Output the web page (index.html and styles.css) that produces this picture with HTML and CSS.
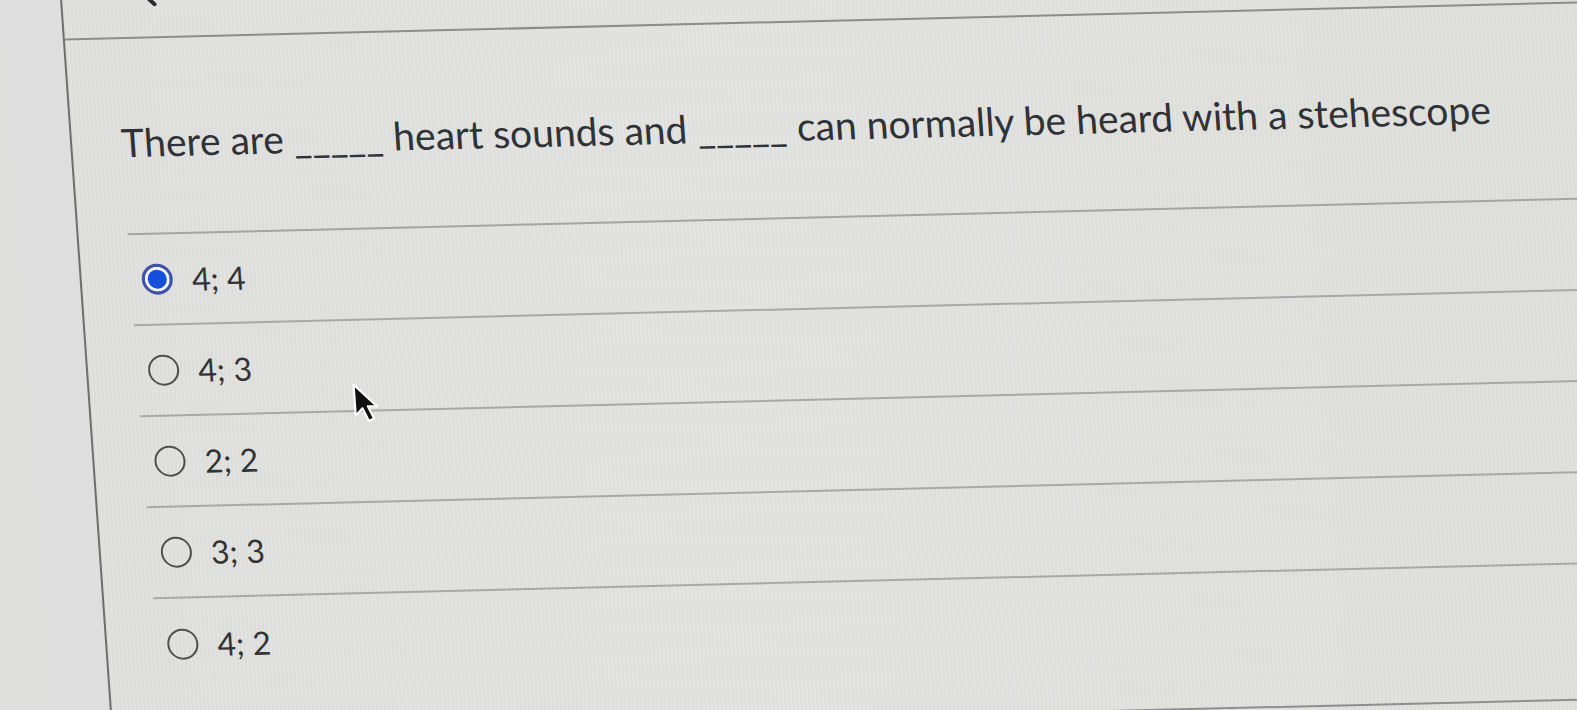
FILE: index.html
```html
<!DOCTYPE html>
<html lang="en">
<head>
  <meta charset="UTF-8">
  <title>Quiz Question</title>
  <link rel="stylesheet" href="styles.css">
</head>
<body>

  <div class="screen">
    <!-- Left navigation edge -->
    <div class="nav-edge"></div>

    <div class="content">
      <!-- Header bar -->
      <div class="topbar">
        <svg class="back-icon" width="30" height="40" viewBox="0 0 30 40">
          <path d="M24 4 L8 20 L24 36" fill="none" stroke="#2a2a2e" stroke-width="4" stroke-linecap="round"/>
        </svg>
      </div>

      <!-- Question -->
      <div class="question">
        <p class="question-text">There are _____ heart sounds and _____ can normally be heard with a stehescope</p>

        <div class="answers">
          <label class="answer">
            <input type="radio" name="q1" class="choice-radio" checked>
            <span class="answer-text">4; 4</span>
          </label>
          <label class="answer">
            <input type="radio" name="q1" class="choice-radio">
            <span class="answer-text">4; 3</span>
          </label>
          <label class="answer">
            <input type="radio" name="q1" class="choice-radio">
            <span class="answer-text">2; 2</span>
          </label>
          <label class="answer">
            <input type="radio" name="q1" class="choice-radio">
            <span class="answer-text">3; 3</span>
          </label>
          <label class="answer answer-last">
            <input type="radio" name="q1" class="choice-radio">
            <span class="answer-text">4; 2</span>
          </label>
        </div>
      </div>

      <!-- Mouse pointer -->
      <svg class="pointer" width="26" height="40" viewBox="0 0 14 22">
        <path d="M1 1 L1 18 L5 14 L8 21 L11 19.8 L8 13 L13 13 Z" fill="#111" stroke="#fff" stroke-width="1.2" stroke-linejoin="round"/>
      </svg>
    </div>
  </div>

</body>
</html>
```

FILE: styles.css
```css
body {
  margin: 0;
  overflow: hidden;
  background-color: #dfdfdd;
  font-family: Lato, "Open Sans", sans-serif;
}
/* Whole screen, slightly sheared */
.screen {
  display: flex;
  width: 1720px;
  height: 820px;
  transform-origin: 0 0;
  transform: matrix(1, -0.0245, 0.07, 1, 0, 0);
  background: linear-gradient(90deg, #e0e0de 0%, #e3e3e1 40%, #dfdfdc 100%);
}
.nav-edge {
  width: 60px;
  flex-shrink: 0;
  border-right: 2px solid #6e6e6e;
  background-color: #dedede;
}
.content {
  flex: 1;
  position: relative;
  background-image: repeating-linear-gradient(90deg, rgba(0,0,0,0.018) 0 2px, rgba(255,255,255,0.02) 2px 4px);
}
.topbar {
  height: 40px;
  border-bottom: 2px solid #8c8c8c;
  display: flex;
  align-items: flex-start;
}
.back-icon {
  margin-left: 68px;
  margin-top: -28px;
}
.question {
  padding-left: 49px;
}
.question-text {
  margin: 80px 0 0 0;
  font-size: 39px;
  line-height: 1.2;
  color: #2f3237;
  white-space: nowrap;
  padding-bottom: 67px;
  border-bottom: 2px solid #a4a4a4;
}
.answers {
  display: flex;
  flex-direction: column;
}
.answer {
  display: flex;
  align-items: center;
  height: 89px;
  border-bottom: 2px solid #a8a8a8;
  padding-left: 11px;
}
.answer-last {
  align-items: flex-start;
  height: 104px;
  padding-top: 30px;
  border-bottom-color: #8e8e8e;
}
.choice-radio {
  appearance: none;
  -webkit-appearance: none;
  margin: 0;
  width: 31px;
  height: 31px;
  border: 2px solid #4e4e4e;
  border-radius: 50%;
  background: transparent;
}
.choice-radio:checked {
  border: 3px solid #4153a8;
  background-color: #1450dc;
  box-shadow: inset 0 0 0 3px #f3f4fa;
}
.answer-text {
  margin-left: 19px;
  font-size: 32px;
  line-height: 31px;
  color: #333333;
}
.pointer {
  position: absolute;
  left: 262px;
  top: 391px;
}
```
